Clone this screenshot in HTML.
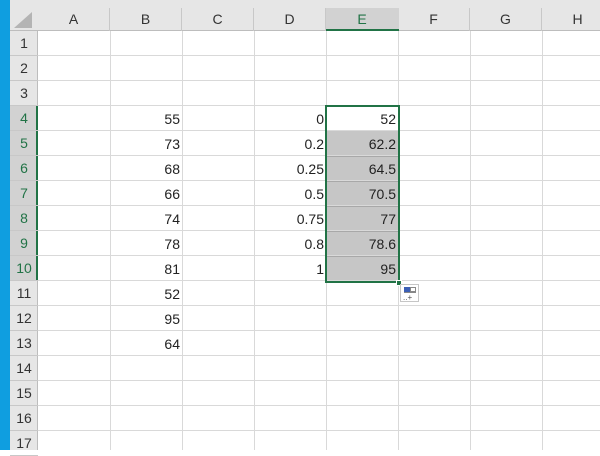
<!DOCTYPE html>
<html><head><meta charset="utf-8"><style>
*{margin:0;padding:0;box-sizing:border-box}
body{width:600px;height:450px;overflow:hidden;background:#fff;position:relative;font-family:"Liberation Sans","Noto Sans CJK JP",sans-serif;font-size:14px;color:#222}
div{position:absolute}
.strip{left:0;top:0;width:10px;height:450px;background:#0f9ee0}
.hdr{top:0;left:10px;width:590px;height:31px;background:#e6e6e6;border-bottom:1px solid #bdbdbd}
.rh{left:10px;top:31px;width:28px;height:419px;background:#e6e6e6;border-right:1px solid #bdbdbd}
.ch{top:8px;height:23px;width:72px;text-align:center;line-height:23px;color:#333;border-right:1px solid #c8c8c8}
.rn{left:10px;width:28px;height:25px;text-align:center;line-height:25px;color:#333;border-bottom:1px solid #c8c8c8}
.vl{top:31px;height:419px;width:1px;background:#d9d9d9}
.hl{left:38px;width:562px;height:1px;background:#d9d9d9}
.c{width:68px;height:25px;line-height:27px;text-align:right}
.sel{left:327px;top:131px;width:71px;height:150px;background:#c6c6c6}
</style></head><body>
<div class="strip"></div>
<div class="hdr"></div>
<div class="rh"></div>
<div style="left:326px;top:8px;width:73px;height:23px;background:#d2d2d2;border-bottom:2px solid #217346"></div>
<div style="left:10px;top:106px;width:28px;height:175px;background:#d2d2d2;border-right:2px solid #217346"></div>
<div style="left:14px;top:12px;width:0;height:0;border-left:18px solid transparent;border-bottom:16px solid #b4b4b4"></div>
<div class="ch" style="left:38px">A</div>
<div class="ch" style="left:110px">B</div>
<div class="ch" style="left:182px">C</div>
<div class="ch" style="left:254px">D</div>
<div class="ch" style="left:326px;color:#217346;border-right:none">E</div>
<div class="ch" style="left:398px">F</div>
<div class="ch" style="left:470px">G</div>
<div class="ch" style="left:542px">H</div>
<div class="rn" style="top:31px">1</div>
<div class="rn" style="top:56px">2</div>
<div class="rn" style="top:81px">3</div>
<div class="rn" style="top:106px;color:#217346">4</div>
<div class="rn" style="top:131px;color:#217346">5</div>
<div class="rn" style="top:156px;color:#217346">6</div>
<div class="rn" style="top:181px;color:#217346">7</div>
<div class="rn" style="top:206px;color:#217346">8</div>
<div class="rn" style="top:231px;color:#217346">9</div>
<div class="rn" style="top:256px;color:#217346">10</div>
<div class="rn" style="top:281px">11</div>
<div class="rn" style="top:306px">12</div>
<div class="rn" style="top:331px">13</div>
<div class="rn" style="top:356px">14</div>
<div class="rn" style="top:381px">15</div>
<div class="rn" style="top:406px">16</div>
<div class="rn" style="top:431px">17</div>
<div class="sel"></div>
<div class="vl" style="left:110px"></div><div class="vl" style="left:182px"></div><div class="vl" style="left:254px"></div><div class="vl" style="left:326px"></div><div class="vl" style="left:398px"></div><div class="vl" style="left:470px"></div><div class="vl" style="left:542px"></div>
<div class="hl" style="top:55px"></div><div class="hl" style="top:80px"></div><div class="hl" style="top:105px"></div><div class="hl" style="top:130px"></div><div class="hl" style="top:155px"></div><div class="hl" style="top:180px"></div><div class="hl" style="top:205px"></div><div class="hl" style="top:230px"></div><div class="hl" style="top:255px"></div><div class="hl" style="top:280px"></div><div class="hl" style="top:305px"></div><div class="hl" style="top:330px"></div><div class="hl" style="top:355px"></div><div class="hl" style="top:380px"></div><div class="hl" style="top:405px"></div><div class="hl" style="top:430px"></div>
<div style="left:327px;top:156px;width:71px;height:1px;background:#a8a8a8"></div>
<div style="left:327px;top:181px;width:71px;height:1px;background:#a8a8a8"></div>
<div style="left:327px;top:206px;width:71px;height:1px;background:#a8a8a8"></div>
<div style="left:327px;top:231px;width:71px;height:1px;background:#a8a8a8"></div>
<div style="left:327px;top:256px;width:71px;height:1px;background:#a8a8a8"></div>
<div class="c" style="left:112px;top:106px">55</div>
<div class="c" style="left:112px;top:131px">73</div>
<div class="c" style="left:112px;top:156px">68</div>
<div class="c" style="left:112px;top:181px">66</div>
<div class="c" style="left:112px;top:206px">74</div>
<div class="c" style="left:112px;top:231px">78</div>
<div class="c" style="left:112px;top:256px">81</div>
<div class="c" style="left:112px;top:281px">52</div>
<div class="c" style="left:112px;top:306px">95</div>
<div class="c" style="left:112px;top:331px">64</div>
<div class="c" style="left:256px;top:106px">0</div>
<div class="c" style="left:256px;top:131px">0.2</div>
<div class="c" style="left:256px;top:156px">0.25</div>
<div class="c" style="left:256px;top:181px">0.5</div>
<div class="c" style="left:256px;top:206px">0.75</div>
<div class="c" style="left:256px;top:231px">0.8</div>
<div class="c" style="left:256px;top:256px">1</div>
<div class="c" style="left:328px;top:106px">52</div>
<div class="c" style="left:328px;top:131px">62.2</div>
<div class="c" style="left:328px;top:156px">64.5</div>
<div class="c" style="left:328px;top:181px">70.5</div>
<div class="c" style="left:328px;top:206px">77</div>
<div class="c" style="left:328px;top:231px">78.6</div>
<div class="c" style="left:328px;top:256px">95</div>
<div style="left:325px;top:105px;width:75px;height:178px;border:2px solid #217346"></div>
<div style="left:396px;top:280px;width:6px;height:6px;background:#217346;border:1px solid #fff"></div>
<div style="left:400px;top:284px;width:19px;height:18px;border:1px solid #c6c6c6;background:#fff"></div>
<div style="left:404px;top:287px;width:6px;height:5px;background:#3c5fb5"></div>
<div style="left:410px;top:287px;width:6px;height:5px;border:1px solid #888"></div>
<div style="left:404px;top:292px;width:12px;height:1px;background:#888"></div>
<div style="left:403px;top:294px;font-size:8px;line-height:8px;color:#555">..+</div>
</body></html>
